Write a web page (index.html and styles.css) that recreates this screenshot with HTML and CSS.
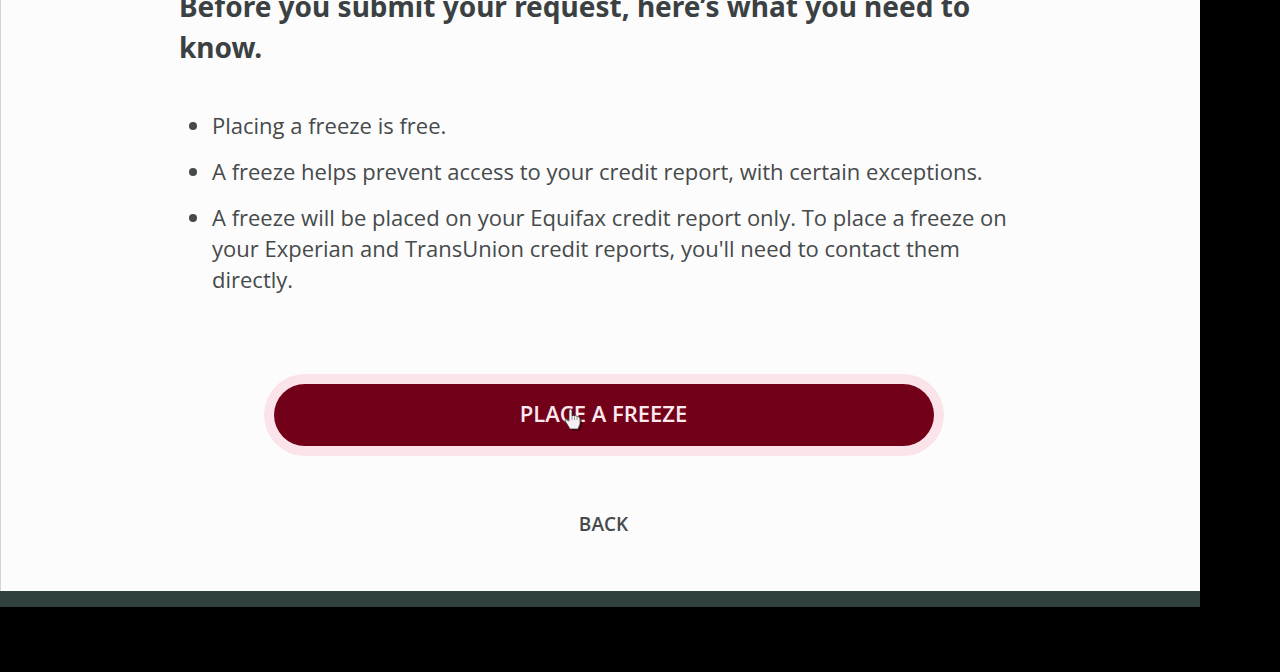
FILE: index.html
```html
<!DOCTYPE html>
<html lang="en">
<head>
<meta charset="utf-8">
<title>Place a freeze</title>
<link rel="stylesheet" href="styles.css">
</head>
<body>
<div class="page">
  <main class="content">
    <h1 class="heading">Before you submit your request, here’s what you need to know.</h1>
    <ul class="notes">
      <li>Placing a freeze is free.</li>
      <li>A freeze helps prevent access to your credit report, with certain exceptions.</li>
      <li>A freeze will be placed on your Equifax credit report only. To place a freeze on your Experian and TransUnion credit reports, you'll need to contact them directly.</li>
    </ul>
    <div class="actions">
      <button class="primary" type="button">PLACE A FREEZE
        <svg class="pointer" viewBox="0 0 18 24" aria-hidden="true"><path d="M7 22l-4-6-2-3q0-2 2-1l2 2V4q0-2 1.500-2T8 4v5l7 1q2 0 2 2v5l-2 5z" transform="translate(1 1)" fill="#300009" opacity=".6"/><path d="M6 21l-3-5-2-3q0-2 2-1l2 1V3q0-2 1.500-2T8 3v5q1.500-1 2.500 0 1.500-1 2.500 .5Q16 8 16 11v5l-2 5z" fill="#f5f1f2" stroke="#303030" stroke-width=".7"/><path d="M8 8v4m2.500-3v3M13 9v3" stroke="#999" fill="none"/></svg>
      </button>
      <button class="back" type="button">BACK</button>
    </div>
  </main>
  <footer class="footer"></footer>
</div>
</body>
</html>
```
FILE: styles.css
```css
* { box-sizing: border-box; }
body {
  margin: 0;
  background: #000;
  color: #3b4142;
  font-family: "Open Sans", "Noto Sans", sans-serif;
  overflow: hidden;
}
.page {
  margin-right: 80px;
  background: #fcfcfc;
}
.content {
  padding: 0 175px 50px;
  border-left: 1px solid #d5d5d5;
}
.heading {
  margin: -14px 0 0;
  padding: 0 3px;
  font-family: "Noto Sans", "Open Sans", sans-serif;
  font-size: 28px;
  line-height: 41px;
  font-weight: 700;
}
.notes {
  display: grid;
  gap: 15px;
  margin: 42px 0 0;
  padding: 0 8px 0 36px;
  color: #464a4b;
  font-size: 22px;
  line-height: 31px;
}
.actions {
  display: flex;
  flex-direction: column;
  align-items: center;
  margin-top: 89px;
  padding-left: 6px;
}
button {
  border: 0;
  padding: 0 16px;
  font: inherit;
  font-weight: 600;
}
.primary {
  position: relative;
  width: 100%;
  max-width: 660px;
  padding-bottom: 4px;
  height: 62px;
  border-radius: 31px;
  background: #730019;
  color: #fbe9ef;
  box-shadow: 0 0 0 10px #fae3e9;
  font-size: 22px;
}
.pointer {
  position: absolute;
  left: 290px;
  top: 24px;
  width: 18px;
  height: 24px;
}
.back {
  margin-top: 61px;
  background: none;
  color: #464a4b;
  font-size: 19px;
  line-height: 34px;
}
.footer {
  height: 16px;
  background: #30403f;
}
```
